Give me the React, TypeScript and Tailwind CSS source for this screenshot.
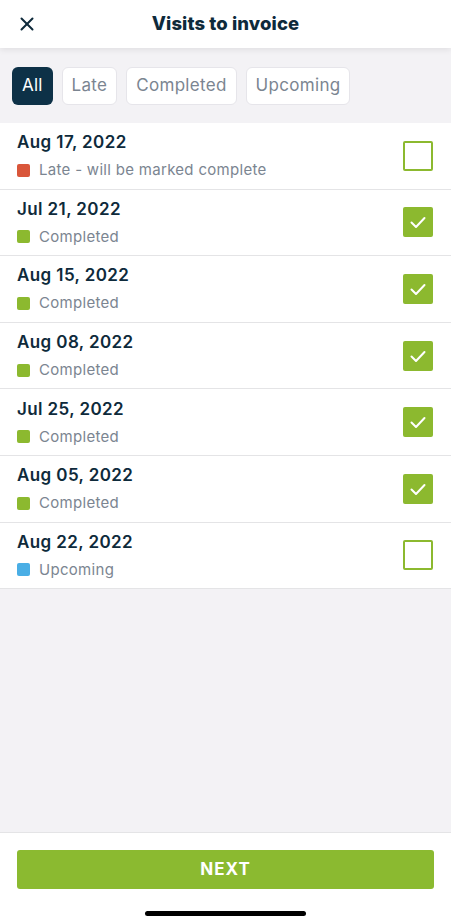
import { X } from 'lucide-react';

type Visit = {
  date: string;
  status: 'late' | 'completed' | 'upcoming';
  label: string;
  checked: boolean;
};

const visits: Visit[] = [
  { date: 'Aug 17, 2022', status: 'late', label: 'Late - will be marked complete', checked: false },
  { date: 'Jul 21, 2022', status: 'completed', label: 'Completed', checked: true },
  { date: 'Aug 15, 2022', status: 'completed', label: 'Completed', checked: true },
  { date: 'Aug 08, 2022', status: 'completed', label: 'Completed', checked: true },
  { date: 'Jul 25, 2022', status: 'completed', label: 'Completed', checked: true },
  { date: 'Aug 05, 2022', status: 'completed', label: 'Completed', checked: true },
  { date: 'Aug 22, 2022', status: 'upcoming', label: 'Upcoming', checked: false },
];

const dotColor = {
  late: 'bg-[#d9563a]',
  completed: 'bg-[#8cb92f]',
  upcoming: 'bg-[#4aaee5]',
};

const filters = ['All', 'Late', 'Completed', 'Upcoming'];

function Checkbox({ checked }: { checked: boolean }) {
  if (checked) {
    return (
      <div className="w-[30px] h-[30px] rounded-[2px] bg-[#8cb92f] flex items-center justify-center">
        <svg width="20" height="20" viewBox="0 0 20 20" fill="none">
          <path d="M3.5 10.5l4.5 4.5 8.5-9" stroke="white" strokeWidth="2" strokeLinecap="round" strokeLinejoin="round" />
        </svg>
      </div>
    );
  }
  return <div className="w-[30px] h-[30px] rounded-[2px] border-2 border-[#8cb92f] bg-white" />;
}

export default function App() {
  return (
    <div className="h-[923px] w-[451px] flex flex-col bg-[#f3f2f5] font-['Inter',sans-serif] text-[#0e2a3b]">
      <header className="relative z-10 h-[48px] bg-white shadow-[0_2px_6px_rgba(0,0,0,0.08)] flex items-center px-4">
        <X className="w-[22px] h-[22px] text-[#0e2a3b]" strokeWidth={2.2} />
        <h1 className="absolute left-0 right-0 text-center text-[18.5px] font-extrabold tracking-[0.1px] pointer-events-none">
          Visits to invoice
        </h1>
      </header>

      <div className="flex gap-[9px] px-3 pt-[19px] pb-[18px]">
        {filters.map((f, i) => (
          <button
            key={f}
            type="button"
            className={
              i === 0
                ? 'h-[38px] px-[10px] rounded-[6px] bg-[#0d3147] text-white text-[17px] tracking-[0.2px]'
                : 'h-[38px] px-[9px] rounded-[6px] bg-white border border-[#e6e5ea] text-[#7b8591] text-[17px] tracking-[0.3px]'
            }
          >
            {f}
          </button>
        ))}
      </div>

      <div className="flex-1">
        <ul className="bg-white">
          {visits.map((v) => (
            <li key={v.date} className="h-[66.6px] flex items-center justify-between pl-[17px] pr-[18px] border-b border-[#e4e4e6]">
              <div className="flex flex-col">
                <span className="text-[17px] font-semibold leading-[22px] tracking-[0.4px]">{v.date}</span>
                <div className="flex items-center mt-[7px]">
                  <span className={`w-[13px] h-[13px] rounded-[2px] ${dotColor[v.status]}`} />
                  <span className="ml-[9px] text-[15px] leading-[20px] text-[#7b8591] tracking-[0.3px]">{v.label}</span>
                </div>
              </div>
              <Checkbox checked={v.checked} />
            </li>
          ))}
        </ul>
      </div>

      <footer className="h-[91px] bg-white border-t border-[#e4e4e6] flex flex-col items-center">
        <button
          type="button"
          className="mt-[17px] w-[417px] h-[39px] rounded-[3px] bg-[#8bba30] text-white text-[17px] font-bold tracking-[1px]"
        >
          NEXT
        </button>
        <div className="mt-[22px] w-[161px] h-[5px] rounded-full bg-black" />
      </footer>
    </div>
  );
}
